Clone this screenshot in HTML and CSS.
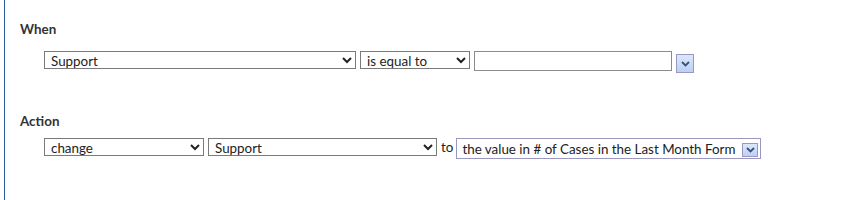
FILE: index.html
```html
<!DOCTYPE html>
<html lang="en">
<head>
  <meta charset="UTF-8" />
  <title>Rule Editor</title>
  <link rel="stylesheet" href="styles.css">
</head>
<body>

<div class="rule">
  <div class="label">When</div>
  <div class="row when-row">
    <select class="field-select">
      <option>Support</option>
    </select>
    <select class="op-select">
      <option>is equal to</option>
    </select>
    <input class="value-input" type="text">
    <button class="pick">
      <svg width="9" height="6" viewBox="0 0 9 6"><path d="M1 1l3.5 3.5L8 1" fill="none" stroke="#3c4f78" stroke-width="1.8"/></svg>
    </button>
  </div>

  <div class="label action-label">Action</div>
  <div class="row">
    <select class="verb-select">
      <option>change</option>
    </select>
    <select class="target-select">
      <option>Support</option>
    </select>
    <span class="to">to</span>
    <div class="combo">
      <span class="combo-text">the value in # of Cases in the Last Month Form</span>
      <button class="pick small">
        <svg width="9" height="6" viewBox="0 0 9 6"><path d="M1 1l3.5 3.5L8 1" fill="none" stroke="#3c4f78" stroke-width="1.8"/></svg>
      </button>
    </div>
  </div>
</div>

</body>
</html>
```

FILE: styles.css
```css
body {
  margin: 0;
  background: #fff;
  font-family: 'Segoe UI', Lato, sans-serif;
  font-size: 13.4px;
  color: #222;
}
.rule {
  margin-left: 4px;
  height: 200px;
  border-left: 1px solid #2f5e9c;
  padding: 21px 0 0 15px;
  box-sizing: border-box;
}
.label {
  font-weight: bold;
  color: #333;
  line-height: 16px;
  margin-bottom: 14px;
}
.action-label {
  margin-top: 40px;
  margin-bottom: 9px;
}
.row {
  display: flex;
  align-items: flex-start;
  gap: 4px;
  padding-left: 24px;
  white-space: nowrap;
}
select, input {
  font-family: inherit;
  font-size: 13.4px;
  color: #222;
  border: 1px solid #7a7a7a;
  border-radius: 0;
  background: #fff;
  box-sizing: border-box;
  margin: 0;
}
select {
  height: 18px;
  padding: 0 0 0 2px;
  line-height: 16px;
}
.field-select { width: 312px; }
.op-select { width: 110px; }
.value-input {
  width: 198px;
  height: 20px;
  border-color: #8c8c8c;
}
.verb-select { width: 160px; }
.target-select { width: 229px; }
.to {
  line-height: 18px;
  margin-right: -1px;
}
.pick {
  width: 18px;
  height: 19px;
  margin-top: 3px;
  padding: 0;
  border: 1px solid #9a98c0;
  background: linear-gradient(#dce7fb, #bcd0f4);
  display: flex;
  align-items: center;
  justify-content: center;
}
.combo {
  width: 305px;
  height: 21px;
  border: 1px solid #9a98c0;
  box-sizing: border-box;
  display: flex;
  align-items: center;
  justify-content: space-between;
  padding: 0 2px 0 5px;
}
.pick.small {
  width: 16px;
  height: 14px;
  margin-top: 2px;
}
```
